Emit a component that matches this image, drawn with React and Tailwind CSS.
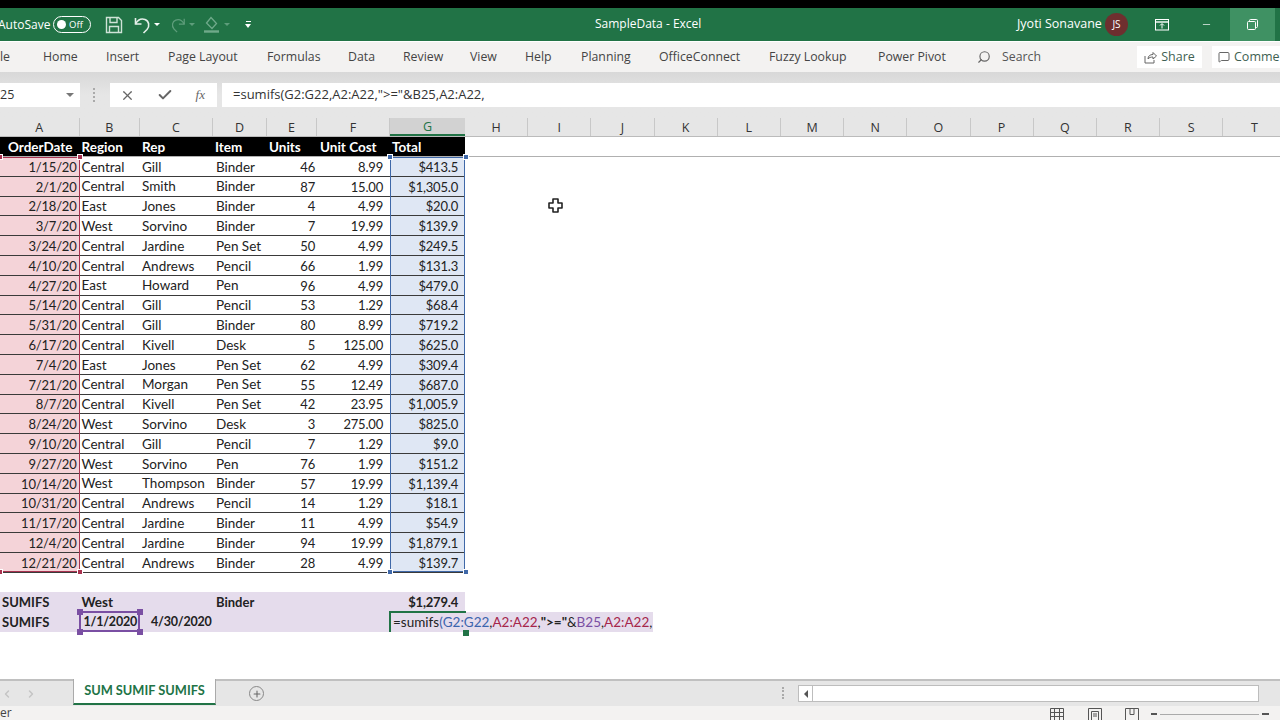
import React from 'react';
import { X, Check, Search, Minus, Plus, MessageSquare, ChevronLeft, ChevronRight } from 'lucide-react';

const UI = 'font-["Open_Sans","Noto_Sans",sans-serif]';
const CELL = 'font-["Lato","Liberation_Sans",sans-serif]';
const NUM = 'text-[13px] tracking-[-0.2px]';

const tabs = [
  ['Home', 'ml-[33px] w-[34px]'], ['Insert', 'ml-[29px] w-[31px]'], ['Page Layout', 'ml-[31px] w-[70px]'], ['Formulas', 'ml-[29px] w-[53px]'],
  ['Data', 'ml-[28px] w-[27px]'], ['Review', 'ml-[28px] w-[40px]'], ['View', 'ml-[27px] w-[27px]'], ['Help', 'ml-[28px] w-[26px]'],
  ['Planning', 'ml-[30px] w-[48px]'], ['OfficeConnect', 'ml-[30px] w-[80px]'], ['Fuzzy Lookup', 'ml-[30px] w-[77px]'], ['Power Pivot', 'ml-[32px] w-[67px]'],
];

const colHeads = [
  ['A', 'w-[79.5px]'], ['B', 'w-[60.5px]'], ['C', 'w-[73px]'], ['D', 'w-[54px]'], ['E', 'w-[50px]'], ['F', 'w-[73px]'],
];
const moreHeads = ['H', 'I', 'J', 'K', 'L', 'M', 'N', 'O', 'P', 'Q', 'R', 'S', 'T'];

const rows = [
  ['1/15/20', 'Central', 'Gill', 'Binder', '46', '8.99', '$413.5'],
  ['2/1/20', 'Central', 'Smith', 'Binder', '87', '15.00', '$1,305.0'],
  ['2/18/20', 'East', 'Jones', 'Binder', '4', '4.99', '$20.0'],
  ['3/7/20', 'West', 'Sorvino', 'Binder', '7', '19.99', '$139.9'],
  ['3/24/20', 'Central', 'Jardine', 'Pen Set', '50', '4.99', '$249.5'],
  ['4/10/20', 'Central', 'Andrews', 'Pencil', '66', '1.99', '$131.3'],
  ['4/27/20', 'East', 'Howard', 'Pen', '96', '4.99', '$479.0'],
  ['5/14/20', 'Central', 'Gill', 'Pencil', '53', '1.29', '$68.4'],
  ['5/31/20', 'Central', 'Gill', 'Binder', '80', '8.99', '$719.2'],
  ['6/17/20', 'Central', 'Kivell', 'Desk', '5', '125.00', '$625.0'],
  ['7/4/20', 'East', 'Jones', 'Pen Set', '62', '4.99', '$309.4'],
  ['7/21/20', 'Central', 'Morgan', 'Pen Set', '55', '12.49', '$687.0'],
  ['8/7/20', 'Central', 'Kivell', 'Pen Set', '42', '23.95', '$1,005.9'],
  ['8/24/20', 'West', 'Sorvino', 'Desk', '3', '275.00', '$825.0'],
  ['9/10/20', 'Central', 'Gill', 'Pencil', '7', '1.29', '$9.0'],
  ['9/27/20', 'West', 'Sorvino', 'Pen', '76', '1.99', '$151.2'],
  ['10/14/20', 'West', 'Thompson', 'Binder', '57', '19.99', '$1,139.4'],
  ['10/31/20', 'Central', 'Andrews', 'Pencil', '14', '1.29', '$18.1'],
  ['11/17/20', 'Central', 'Jardine', 'Binder', '11', '4.99', '$54.9'],
  ['12/4/20', 'Central', 'Jardine', 'Binder', '94', '19.99', '$1,879.1'],
  ['12/21/20', 'Central', 'Andrews', 'Binder', '28', '4.99', '$139.7'],
];

const GRID = 'grid grid-cols-[79.5px_60.5px_73px_54px_50px_73px_75px] w-[465px]';

function Handle({ className }) {
  return <div className={`absolute w-[6px] h-[6px] ${className}`} />;
}

function TitleBar() {
  return (
    <div className={`h-[33px] bg-[#217346] flex items-center text-white text-[12.5px] whitespace-nowrap ${UI}`}>
      <span className="ml-[-2px] w-[50px] shrink-0 text-[12px]">AutoSave</span>
      <div className="ml-[5px] w-[38px] h-[17px] shrink-0 rounded-full border border-white flex items-center px-[3px] gap-[3px]">
        <div className="w-[9px] h-[9px] rounded-full bg-white" />
        <span className="text-[9.5px] leading-none">Off</span>
      </div>
      <svg className="ml-[14px] shrink-0" width="18" height="18" viewBox="0 0 18 18" fill="none" stroke="#cfe3d7" strokeWidth="1.4">
        <path d="M1.5 1.5h12l3 3v12h-15z" />
        <path d="M5 1.5v5h7v-5M4.5 16.5v-6h9v6" />
      </svg>
      <svg className="ml-[11px] shrink-0" width="17" height="18" viewBox="0 0 17 18" fill="none" stroke="#e4efe9" strokeWidth="1.6">
        <path d="M1.5 2v6h6" />
        <path d="M1.5 8C4 3.5 8 2.5 11 3.5c4 1.5 5 6.5 2 10l-3.5 3.5" />
      </svg>
      <div className="ml-[3px] w-0 h-0 shrink-0 border-x-[3px] border-t-[3px] border-x-transparent border-t-white" />
      <svg className="ml-[10px] shrink-0" width="16" height="16" viewBox="0 0 17 18" fill="none" stroke="#5e9d7b" strokeWidth="1.4">
        <path d="M15.5 2v6h-6" />
        <path d="M15.5 8C13 3.5 9 2.5 6 3.5c-4 1.5-5 6.5-2 10l3.5 3.5" />
      </svg>
      <div className="ml-[3px] w-0 h-0 shrink-0 border-x-[3px] border-t-[3px] border-x-transparent border-t-[#5e9d7b]" />
      <svg className="ml-[8px] shrink-0" width="17" height="18" viewBox="0 0 17 18" fill="none" stroke="#6fa98a" strokeWidth="1.3">
        <path d="M8 1.5l5.5 6-4.5 5-5.5-5.5z" />
        <path d="M1 15.5h15" strokeWidth="2.4" />
      </svg>
      <div className="ml-[4px] w-0 h-0 shrink-0 border-x-[3px] border-t-[3px] border-x-transparent border-t-[#5e9d7b]" />
      <div className="ml-[15px] w-[6px] shrink-0 flex flex-col items-center gap-[2px]">
        <div className="w-[5px] h-[1px] bg-white" />
        <div className="w-0 h-0 border-x-[3px] border-t-[4px] border-x-transparent border-t-white" />
      </div>
      <span className="ml-[344px] w-[120px] shrink-0 text-[12px] -translate-y-px">SampleData - Excel</span>
      <span className="ml-[302px] w-[78px] shrink-0">Jyoti Sonavane</span>
      <div className="ml-[10px] w-[23px] h-[23px] shrink-0 rounded-full bg-[#6e2f2f] flex items-center justify-center text-[10px]">JS</div>
      <svg className="ml-[27px] shrink-0" width="14" height="12" viewBox="0 0 14 12" fill="none" stroke="#fff">
        <rect x="0.5" y="0.5" width="13" height="10.5" />
        <path d="M0.5 3h13" strokeWidth="1.4" />
        <path d="M7 9.5V5M5 6.500l2-2 2 2" />
      </svg>
      <Minus className="ml-[32px] shrink-0" size={11} color="#fff" strokeWidth={1.5} />
      <div className="ml-[18px] w-[45px] h-full shrink-0 bg-[#3f9163] flex items-center justify-center">
        <svg width="11" height="11" viewBox="0 0 11 11" fill="none" stroke="#fff">
          <rect x="0.5" y="2.5" width="8" height="8" rx="1" />
          <path d="M2.5 2.5v-1a1 1 0 0 1 1-1h6a1 1 0 0 1 1 1v6a1 1 0 0 1-1 1h-1" />
        </svg>
      </div>
    </div>
  );
}

function Ribbon() {
  return (
    <div className={`h-[30px] mt-[1px] bg-[#f3f2f1] flex items-center text-[12.3px] text-[#444] whitespace-nowrap ${UI}`}>
      <span className="w-[10px] shrink-0 overflow-hidden flex justify-end">le</span>
      {tabs.map(([t, cls]) => <span key={t} className={`${cls} shrink-0`}>{t}</span>)}
      <Search className="ml-[32px] shrink-0 -scale-x-100" size={14} color="#666" />
      <span className="ml-[11px] w-[40px] shrink-0 text-[#555]">Search</span>
      <div className="ml-[95px] w-[65px] h-[22px] shrink-0 bg-white flex items-center justify-center gap-[4px] text-[#3f5f52] text-[12.5px]">
        <svg width="13" height="13" viewBox="0 0 13 13" fill="none" stroke="#666">
          <path d="M1 5v7h9V9" />
          <path d="M4 8c0-3 2-4.500 5-4.500V1.500l3.500 3.500L9 8V6C7 6 5 6.500 4 8z" />
        </svg>
        Share
      </div>
      <div className="ml-[10px] flex-1 h-[22px] bg-white flex items-center pl-[6px] gap-[4px] text-[#3f5f52] text-[12.5px] overflow-hidden">
        <MessageSquare size={12} color="#666" />
        Comme
      </div>
    </div>
  );
}

function FormulaBar() {
  return (
    <div className={`h-[46px] bg-gradient-to-b from-[#d8d8d8] via-[#e6e6e6] to-[#e6e6e6] flex items-start pt-[11px] text-[#333] ${UI}`}>
      <div className="w-[80px] h-[24px] bg-white flex items-center justify-between pr-[6px] text-[12.5px]">
        <span>25</span>
        <div className="w-0 h-0 border-x-[4px] border-t-[4px] border-x-transparent border-t-[#777]" />
      </div>
      <div className="ml-[13px] w-[2px] h-[14px] mt-[5px] border-l-2 border-dotted border-[#aaa]" />
      <div className="ml-[15px] w-[107px] h-[24px] bg-white flex items-center justify-between pl-[10px] pr-[12px]">
        <X size={15} color="#666" />
        <Check size={16} color="#666" strokeWidth={3} />
        <span className="font-['Liberation_Serif',serif] italic text-[13px] text-[#666]">fx</span>
      </div>
      <div className="ml-[5px] flex-1 h-[24px] bg-white flex items-center pl-[11px] text-[13px]">
        =sumifs(G2:G22,A2:A22,"&gt;="&amp;B25,A2:A22,
      </div>
    </div>
  );
}

function ColHeaders() {
  return (
    <div className={`h-[19px] bg-[#e6e6e6] flex text-[12.5px] text-[#333] border-b border-[#bbb] overflow-hidden ${UI}`}>
      {colHeads.map(([c, w]) => (
        <div key={c} className={`${w} shrink-0 pt-[2px] flex items-center justify-center border-r border-[#c8c8c8]`}>{c}</div>
      ))}
      <div className="w-[75px] shrink-0 pt-[2px] flex items-center justify-center bg-[#d2d2d2] border-b-2 border-[#217346] text-[#217346]">G</div>
      {moreHeads.map((c) => (
        <div key={c} className="w-[63.2px] shrink-0 pt-[2px] flex items-center justify-center border-r border-[#c8c8c8]">{c}</div>
      ))}
    </div>
  );
}

function Sheet() {
  return (
    <div className={`relative flex-1 bg-white text-[13.5px] leading-none text-[#222] overflow-hidden ${CELL}`}>
      {/* header row */}
      <div className="h-[20px] border-b border-[#b0b0b0]">
        <div className={`${GRID} h-[19px] bg-black text-white font-bold`}>
          {['OrderDate', 'Region', 'Rep', 'Item', 'Units', 'Unit Cost', 'Total'].map((h, i) => (
            <div key={h} className={`flex items-center pt-[2px] ${i === 0 ? 'pl-[8px]' : i === 5 ? 'pl-[3px]' : 'pl-[2px]'}`}>{h}</div>
          ))}
        </div>
      </div>

      {rows.map((r) => (
        <div key={r[0]} className={`${GRID} h-[19.8px] border-b border-[#3a3a3a]`}>
          <div className={`bg-[#f4d3d8] pt-[2px] flex items-center justify-end pr-[3px] ${NUM}`}>{r[0]}</div>
          <div className="flex items-center pt-[2px] pl-[2px]">{r[1]}</div>
          <div className="flex items-center pt-[2px] pl-[2px]">{r[2]}</div>
          <div className="flex items-center pt-[2px] pl-[3px]">{r[3]}</div>
          <div className={`flex items-center pt-[2px] justify-end pr-[2px] ${NUM}`}>{r[4]}</div>
          <div className={`flex items-center pt-[2px] justify-end pr-[7px] ${NUM}`}>{r[5]}</div>
          <div className={`bg-[#dfe7f4] pt-[2px] flex items-center justify-end pr-[7px] ${NUM}`}>{r[6]}</div>
        </div>
      ))}

      {/* summary block */}
      <div className="h-[19px]" />
      <div className={`${GRID} h-[20px] bg-[#e5dcec] font-bold text-[13px]`}>
        <div className="flex items-center pt-[2px] pl-[2px]">SUMIFS</div>
        <div className="flex items-center pt-[2px] pl-[2px] text-[13.5px]">West</div>
        <div />
        <div className="flex items-center pt-[2px] pl-[3px]">Binder</div>
        <div />
        <div />
        <div className="flex items-center pt-[2px] justify-end pr-[7px] tracking-[-0.2px]">$1,279.4</div>
      </div>
      <div className={`${GRID} h-[20px] bg-[#e5dcec] font-bold text-[13px]`}>
        <div className="flex items-center pt-[2px] pl-[2px]">SUMIFS</div>
        <div className="flex items-center pt-[2px] pl-[4px] text-[12.5px] tracking-[-0.2px]">1/1/2020</div>
        <div className="flex items-center pt-[2px] pl-[11px] col-span-2 whitespace-nowrap text-[12.5px] tracking-[-0.2px]">4/30/2020</div>
        <div />
        <div />
        <div className="relative">
          <div className="absolute left-0 top-0 h-full w-[263px] bg-[#e5dcec] flex items-center pt-[2px] pl-[3px] font-normal text-[13.5px] whitespace-pre">
            =sumifs<span className="text-[#3c64ad]">(</span><span className="text-[#3c64ad]">G2:G22</span>,<span className="text-[#a5264b]">A2:A22</span>,<b>"&gt;="</b>&amp;<span className="text-[#7a4fa3]">B25</span>,<span className="text-[#a5264b]">A2:A22</span>,
          </div>
        </div>
      </div>

      {/* range selections */}
      <div className="absolute left-[-2px] top-[20px] w-[81.5px] h-[415px] border-[1.5px] border-[#a8324f]" />
      <Handle className="left-[-3px] top-[17px] bg-[#a8324f] border border-white" />
      <Handle className="left-[76.5px] top-[17px] bg-[#a8324f] border border-white" />
      <Handle className="left-[-3px] top-[432px] bg-[#a8324f] border border-white" />
      <Handle className="left-[76.5px] top-[432px] bg-[#a8324f] border border-white" />

      <div className="absolute left-[390px] top-[20px] w-[75px] h-[415px] border-[1.5px] border-[#3f68a8]" />
      <Handle className="left-[387px] top-[17px] bg-[#3f68a8] border border-white" />
      <Handle className="left-[463px] top-[17px] bg-[#3f68a8] border border-white" />
      <Handle className="left-[387px] top-[432px] bg-[#3f68a8] border border-white" />
      <Handle className="left-[463px] top-[432px] bg-[#3f68a8] border border-white" />

      <div className="absolute left-[79px] top-[474px] w-[61px] h-[21px] border-2 border-[#7a4fa3]" />
      <Handle className="left-[77px] top-[472px] bg-[#7a4fa3]" />
      <Handle className="left-[137px] top-[472px] bg-[#7a4fa3]" />
      <Handle className="left-[77px] top-[492px] bg-[#7a4fa3]" />
      <Handle className="left-[137px] top-[492px] bg-[#7a4fa3]" />

      {/* active cell */}
      <div className="absolute left-[389px] top-[474px] w-[77px] h-[21px] border-l-2 border-t-2 border-[#217346]" />
      <Handle className="left-[463px] top-[493px] w-[4px] h-[3px] bg-[#217346]" />

      {/* cell cursor */}
      <svg className="absolute left-[547px] top-[60px]" width="17" height="17" viewBox="0 0 17 17" fill="#fff" stroke="#222" strokeWidth="1.6">
        <path d="M6 2h5v4h4v5h-4v4H6v-4H2V6h4z" strokeLinejoin="round" />
      </svg>
    </div>
  );
}

function SheetTabs() {
  return (
    <div className={`h-[27px] bg-[#e6e6e6] border-t-2 border-[#c0c0c0] flex ${UI}`}>
      <div className="w-[73px] shrink-0 flex items-center pl-[1px] gap-[12px]">
        <ChevronLeft size={12} color="#c4c4c4" strokeWidth={3} />
        <ChevronRight size={12} color="#c4c4c4" strokeWidth={3} />
      </div>
      <div className="w-[143px] shrink-0 -mt-[2px] h-[26px] bg-white border-x border-[#aaa] border-b-2 border-b-[#217346] flex items-center justify-center font-['Lato',sans-serif] font-bold text-[12.8px] text-[#217346]">
        SUM SUMIF SUMIFS
      </div>
      <div className="ml-[33px] mt-[5px] w-[15px] h-[15px] shrink-0 rounded-full border border-[#888] flex items-center justify-center">
        <Plus size={10} color="#666" strokeWidth={2.5} />
      </div>
      <div className="ml-[518px] mt-[6px] w-[2px] h-[12px] shrink-0 border-l-2 border-dotted border-[#aaa]" />
      <div className="ml-[14px] mt-[4px] h-[17px] w-[461px] shrink-0 bg-white border border-[#bdbdbd] flex items-center">
        <div className="w-[14px] h-full border-r border-[#bdbdbd] flex items-center justify-center">
          <div className="w-0 h-0 border-y-[4px] border-r-[4px] border-y-transparent border-r-[#555]" />
        </div>
      </div>
    </div>
  );
}

function StatusBar() {
  return (
    <div className={`h-[14px] bg-[#f3f2f1] flex text-[12px] text-[#444] overflow-hidden ${UI}`}>
      <span className="leading-[14px] w-[10px] shrink-0">er</span>
      <svg className="ml-[1040px] mt-[2px] shrink-0" width="14" height="12" viewBox="0 0 14 12" fill="none" stroke="#555">
        <path d="M.5.500h13v12H.5zM.5 4.500h13M.5 8.500h13M4.500.500v12M9.500.500v12" />
      </svg>
      <svg className="ml-[24px] mt-[2px] shrink-0" width="14" height="12" viewBox="0 0 14 12" fill="none" stroke="#555">
        <path d="M.5.500h13v12H.5zM3.500 3.500h7v9h-7zM5 6h4M5 8h4" />
      </svg>
      <svg className="ml-[23px] mt-[2px] shrink-0" width="14" height="12" viewBox="0 0 14 12" fill="none" stroke="#555">
        <path d="M.5 12V.500h13V12M5 .500v6h4v-6" />
      </svg>
      <div className="ml-[12px] mt-[7px] w-[6px] h-[2px] shrink-0 bg-[#555]" />
      <div className="ml-[3px] mt-[8px] w-[99px] h-[1px] shrink-0 bg-[#aaa]" />
      <div className="ml-[3px] mt-[7px] w-[7px] h-[2px] shrink-0 bg-[#555]" />
    </div>
  );
}

export default function App() {
  return (
    <div className="w-[1280px] h-[720px] overflow-hidden flex flex-col bg-white">
      <div className="h-[8px] bg-black" />
      <TitleBar />
      <Ribbon />
      <FormulaBar />
      <ColHeaders />
      <Sheet />
      <SheetTabs />
      <StatusBar />
    </div>
  );
}
